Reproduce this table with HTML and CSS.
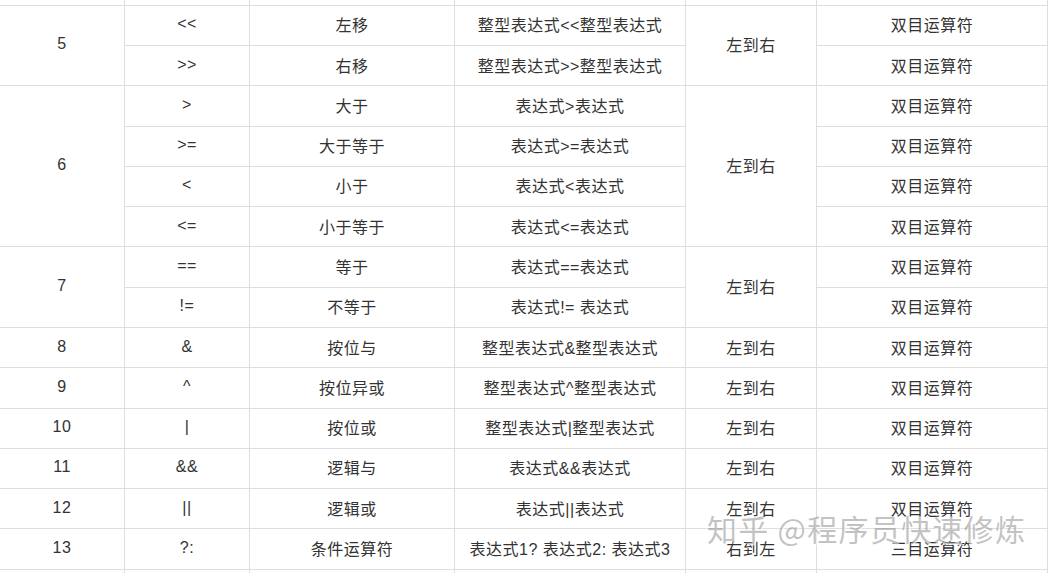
FILE: index.html
```html
<!DOCTYPE html>
<html lang="zh-CN">
<head>
<meta charset="utf-8">
<title>运算符优先级</title>
<link rel="stylesheet" href="styles.css">
</head>
<body>
<div class="page">
  <div class="grid">
    <!-- partial previous row -->
    <div class="cell"></div><div class="cell"></div><div class="cell"></div><div class="cell"></div><div class="cell"></div><div class="cell"></div>

    <!-- 5 -->
    <div class="cell span2">5</div>
    <div class="cell">&lt;&lt;</div>
    <div class="cell">左移</div>
    <div class="cell">整型表达式&lt;&lt;整型表达式</div>
    <div class="cell span2">左到右</div>
    <div class="cell">双目运算符</div>
    <div class="cell">&gt;&gt;</div>
    <div class="cell">右移</div>
    <div class="cell">整型表达式&gt;&gt;整型表达式</div>
    <div class="cell">双目运算符</div>

    <!-- 6 -->
    <div class="cell span4">6</div>
    <div class="cell">&gt;</div>
    <div class="cell">大于</div>
    <div class="cell">表达式&gt;表达式</div>
    <div class="cell span4">左到右</div>
    <div class="cell">双目运算符</div>
    <div class="cell">&gt;=</div>
    <div class="cell">大于等于</div>
    <div class="cell">表达式&gt;=表达式</div>
    <div class="cell">双目运算符</div>
    <div class="cell">&lt;</div>
    <div class="cell">小于</div>
    <div class="cell">表达式&lt;表达式</div>
    <div class="cell">双目运算符</div>
    <div class="cell">&lt;=</div>
    <div class="cell">小于等于</div>
    <div class="cell">表达式&lt;=表达式</div>
    <div class="cell">双目运算符</div>

    <!-- 7 -->
    <div class="cell span2">7</div>
    <div class="cell">==</div>
    <div class="cell">等于</div>
    <div class="cell">表达式==表达式</div>
    <div class="cell span2">左到右</div>
    <div class="cell">双目运算符</div>
    <div class="cell">!=</div>
    <div class="cell">不等于</div>
    <div class="cell">表达式!= 表达式</div>
    <div class="cell">双目运算符</div>

    <!-- 8 -->
    <div class="cell">8</div>
    <div class="cell">&amp;</div>
    <div class="cell">按位与</div>
    <div class="cell">整型表达式&amp;整型表达式</div>
    <div class="cell">左到右</div>
    <div class="cell">双目运算符</div>

    <!-- 9 -->
    <div class="cell">9</div>
    <div class="cell">^</div>
    <div class="cell">按位异或</div>
    <div class="cell">整型表达式^整型表达式</div>
    <div class="cell">左到右</div>
    <div class="cell">双目运算符</div>

    <!-- 10 -->
    <div class="cell">10</div>
    <div class="cell">|</div>
    <div class="cell">按位或</div>
    <div class="cell">整型表达式|整型表达式</div>
    <div class="cell">左到右</div>
    <div class="cell">双目运算符</div>

    <!-- 11 -->
    <div class="cell">11</div>
    <div class="cell">&amp;&amp;</div>
    <div class="cell">逻辑与</div>
    <div class="cell">表达式&amp;&amp;表达式</div>
    <div class="cell">左到右</div>
    <div class="cell">双目运算符</div>

    <!-- 12 -->
    <div class="cell">12</div>
    <div class="cell">||</div>
    <div class="cell">逻辑或</div>
    <div class="cell">表达式||表达式</div>
    <div class="cell">左到右</div>
    <div class="cell">双目运算符</div>

    <!-- 13 -->
    <div class="cell">13</div>
    <div class="cell">?:</div>
    <div class="cell">条件运算符</div>
    <div class="cell">表达式1? 表达式2: 表达式3</div>
    <div class="cell">右到左</div>
    <div class="cell">三目运算符</div>

    <!-- partial next row -->
    <div class="cell"></div><div class="cell"></div><div class="cell"></div><div class="cell"></div><div class="cell"></div><div class="cell"></div>
  </div>
  <div class="watermark">知乎 @程序员快速修炼</div>
</div>
</body>
</html>
```

FILE: styles.css
```css
html, body {
  margin: 0;
  padding: 0;
  background: #ffffff;
  overflow: hidden;
}

.page {
  position: relative;
  width: 1052px;
  height: 573px;
  overflow: hidden;
}

.grid {
  display: grid;
  grid-template-columns: 125px 125px 205px 231px 131px 231px;
  grid-auto-rows: 40.29px;
  margin-top: -34.6px;
  width: 1048px;
  font-family: "Liberation Sans", "Noto Sans CJK SC", sans-serif;
  font-size: 16px;
  letter-spacing: 0.5px;
  color: #333333;
}

.cell {
  box-sizing: border-box;
  border-right: 1px solid #dedede;
  border-bottom: 1px solid #dedede;
  display: flex;
  align-items: center;
  justify-content: center;
  padding-bottom: 2px;
  white-space: nowrap;
}

.span2 { grid-row: span 2; }
.span4 { grid-row: span 4; }

.watermark {
  position: absolute;
  left: 707px;
  top: 508px;
  font-family: "Noto Sans CJK SC", sans-serif;
  font-size: 30px;
  line-height: 40px;
  color: rgba(135, 135, 135, 0.5);
  text-shadow: 1px 1px 0 rgba(255, 255, 255, 0.7);
  white-space: nowrap;
  letter-spacing: 1.3px;
}
```
